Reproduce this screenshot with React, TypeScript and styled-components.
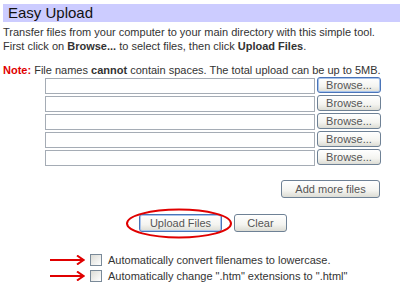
import React from "react";
import styled, { createGlobalStyle } from "styled-components";

const GlobalStyle = createGlobalStyle`
  body {
    margin: 0;
    background: #ffffff;
    font-family: "Liberation Sans", Arial, sans-serif;
  }
`;

const Page = styled.div`
  width: 400px;
  height: 291px;
  padding: 4px 0 0 3px;
  box-sizing: border-box;
  color: #333333;
  font-size: 11px;
  overflow: hidden;
`;

const Header = styled.div`
  height: 18px;
  line-height: 18px;
  background: #ccccff;
  padding-left: 5px;
  font-size: 15px;
  color: #111111;
`;

const Intro = styled.p`
  margin: 3px 0 0 0;
  line-height: 14px;
`;

const Note = styled.p`
  margin: 10px 0 0 0;
  line-height: 14px;
`;

const NoteLabel = styled.b`
  color: #e00000;
`;

const FileList = styled.div`
  display: grid;
  grid-template-columns: 270px 64px;
  column-gap: 2px;
  row-gap: 2px;
  margin: 1px 0 0 42px;
`;

const FileInput = styled.div`
  height: 16px;
  border: 1px solid #a5acb5;
  box-sizing: border-box;
  background: #ffffff;
`;

const Button = styled.button<{ $focused?: boolean }>`
  font-family: "Liberation Sans", Arial, sans-serif;
  font-size: 11px;
  color: #555555;
  padding: 0;
  border: 1px solid ${(p) => (p.$focused ? "#4a74b8" : "#6e8195")};
  border-radius: 3px;
  background: linear-gradient(#ffffff, #f4f4f0 60%, #dcdcd4);
  box-shadow: ${(p) => (p.$focused ? "inset 0 0 0 1px #a8c4ec" : "none")};
  box-sizing: border-box;
`;

const BrowseButton = styled(Button)`
  width: 64px;
  height: 16px;
  margin-top: -1px;
`;

const AddRow = styled.div`
  display: flex;
  justify-content: flex-end;
  width: 377px;
  margin-top: 14px;
`;

const AddButton = styled(Button)`
  width: 99px;
  height: 18px;
`;

const ActionRow = styled.div`
  display: flex;
  gap: 12px;
  margin: 16px 0 0 136px;
`;

const ActionButton = styled(Button)<{ $width: number }>`
  width: ${(p) => p.$width}px;
  height: 18px;
`;

const Circled = styled.div`
  position: relative;
  display: flex;
`;

const Ellipse = styled.svg`
  position: absolute;
  left: -14px;
  top: -6px;
  pointer-events: none;
`;

const Options = styled.div`
  display: flex;
  flex-direction: column;
  gap: 4px;
  margin: 22px 0 0 47px;
`;

const OptionRow = styled.div`
  display: flex;
  align-items: center;
  height: 12px;
`;

const Box = styled.span`
  width: 10px;
  height: 10px;
  border: 1px solid #7a8a99;
  background: linear-gradient(135deg, #dcdcd6, #ffffff);
  margin: 0 6px 0 5px;
`;

const Arrow = () => (
  <svg width="35" height="10" viewBox="0 0 35 10">
    <path d="M0 5 H33" stroke="#e00000" strokeWidth="2" />
    <path d="M27 0.5 L33.5 5 L27 9.5" stroke="#e00000" strokeWidth="2" fill="none" />
  </svg>
);

export default function App() {
  return (
    <Page>
      <GlobalStyle />
      <Header>Easy Upload</Header>
      <Intro>
        Transfer files from your computer to your main directory with this simple tool.
        <br />
        First click on <b>Browse...</b> to select files, then click <b>Upload Files</b>.
      </Intro>
      <Note>
        <NoteLabel>Note:</NoteLabel> File names <b>cannot</b> contain spaces. The total upload can be up
        to 5MB.
      </Note>
      <FileList>
        {[0, 1, 2, 3, 4].map((i) => (
          <React.Fragment key={i}>
            <FileInput />
            <BrowseButton $focused={i === 0}>Browse...</BrowseButton>
          </React.Fragment>
        ))}
      </FileList>
      <AddRow>
        <AddButton>Add more files</AddButton>
      </AddRow>
      <ActionRow>
        <Circled>
          <ActionButton $width={83} $focused>
            Upload Files
          </ActionButton>
          <Ellipse width="108" height="31" viewBox="0 0 108 31">
            <ellipse cx="54" cy="15.5" rx="52" ry="14" fill="none" stroke="#e00000" strokeWidth="2" />
          </Ellipse>
        </Circled>
        <ActionButton $width={53}>Clear</ActionButton>
      </ActionRow>
      <Options>
        <OptionRow>
          <Arrow />
          <Box />
          Automatically convert filenames to lowercase.
        </OptionRow>
        <OptionRow>
          <Arrow />
          <Box />
          Automatically change ".htm" extensions to ".html"
        </OptionRow>
      </Options>
    </Page>
  );
}
